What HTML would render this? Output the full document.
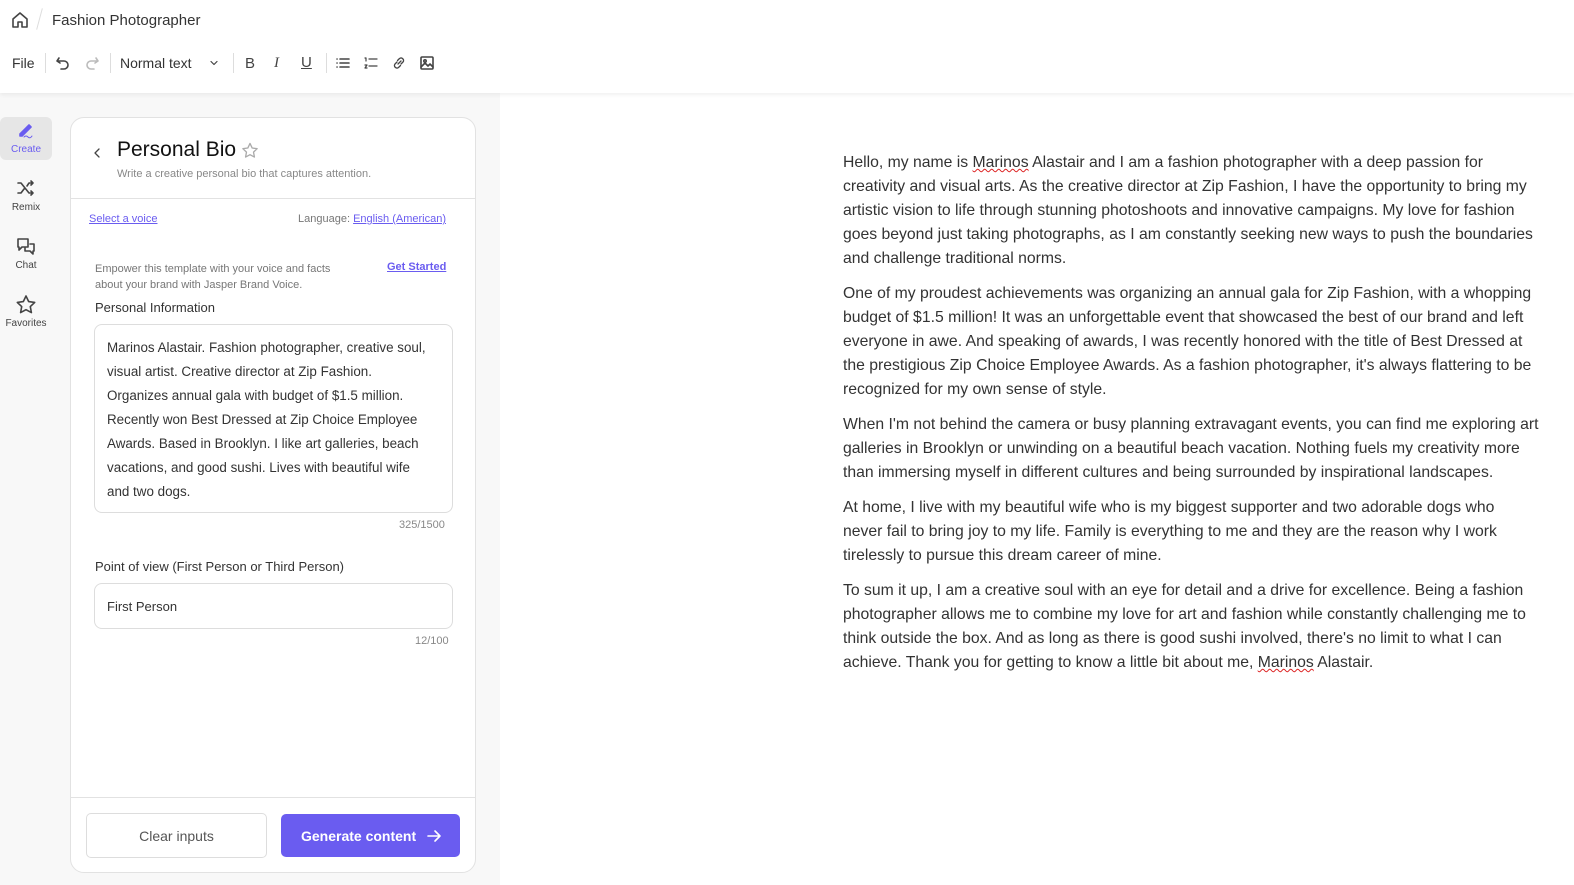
<!DOCTYPE html>
<html><head><meta charset="utf-8"><style>
*{box-sizing:border-box;margin:0;padding:0}
body{width:1574px;height:885px;overflow:hidden;font-family:"Liberation Sans",sans-serif;background:#fff;color:#222;position:relative}
.top{position:absolute;left:0;top:0;width:1574px;height:93px;background:#fff;box-shadow:0 2px 4px rgba(0,0,0,.06);z-index:2}
.abs{position:absolute}
.side{position:absolute;left:0;top:93px;width:500px;height:792px;background:#f8f8f8}
.nav{position:absolute;left:0;width:52px;text-align:center;font-size:10px;color:#444}
.card{position:absolute;left:70px;top:117px;width:406px;height:756px;background:#fff;border:1px solid #e2e2e2;border-radius:14px}
.lnk{color:#6a5cf0;text-decoration:underline}
.doc{position:absolute;left:843px;top:151px;width:696px;font-size:15.75px;line-height:24px;color:#333}
.doc p{margin-bottom:11px}
.sq{text-decoration:underline wavy #d22;text-decoration-thickness:1px}
svg{stroke:#444;fill:none;stroke-width:1.6;stroke-linecap:round;stroke-linejoin:round}
</style></head><body>
<div class="top">
<svg class="abs" style="left:10px;top:10px" width="20" height="20" viewBox="0 0 20 20"><path d="M3 9l7-6 7 6v8H12v-5H8v5H3z"/></svg>
<div class="abs" style="left:39px;top:8px;width:1px;height:22px;background:#ddd;transform:rotate(15deg)"></div>
<div class="abs" style="left:52px;top:12px;font-size:15px;color:#333">Fashion Photographer</div>
<div class="abs" style="left:12px;top:55px;font-size:14px;color:#333">File</div>
<div class="abs" style="left:45px;top:53px;width:1px;height:20px;background:#ddd"></div>
<svg class="abs" style="left:55px;top:55px" width="16" height="16" viewBox="0 0 16 16"><path d="M4 3L2 6l3 2M2 6h7a4 4 0 010 8H6"/></svg>
<svg class="abs" style="left:84px;top:55px" width="16" height="16" viewBox="0 0 16 16"><path stroke="#bbb" d="M12 3l2 3-3 2M14 6H7a4 4 0 000 8h3"/></svg>
<div class="abs" style="left:110px;top:53px;width:1px;height:20px;background:#ddd"></div>
<div class="abs" style="left:120px;top:55px;font-size:14px;color:#333">Normal text</div>
<svg class="abs" style="left:208px;top:57px" width="12" height="12" viewBox="0 0 12 12"><path d="M3 4.5l3 3 3-3" stroke-width="1.2"/></svg>
<div class="abs" style="left:233px;top:53px;width:1px;height:20px;background:#ddd"></div>
<div class="abs" style="left:245px;top:55px;font-size:15px;color:#444">B</div>
<div class="abs" style="left:274px;top:55px;font-size:15px;color:#444;font-style:italic;font-family:'Liberation Serif'">I</div>
<div class="abs" style="left:301px;top:54px;font-size:15px;color:#444;text-decoration:underline">U</div>
<div class="abs" style="left:326px;top:53px;width:1px;height:20px;background:#ddd"></div>
<svg class="abs" style="left:335px;top:55px" width="16" height="16" viewBox="0 0 16 16"><path d="M2 4h.1M2 8h.1M2 12h.1M5 4h9M5 8h9M5 12h9"/></svg>
<svg class="abs" style="left:363px;top:55px" width="16" height="16" viewBox="0 0 16 16"><path d="M2 3h1v3M6 4h8M6 11h8M2 10h2l-2 3h2" stroke-width="1.2"/></svg>
<svg class="abs" style="left:391px;top:55px" width="16" height="16" viewBox="0 0 16 16"><path d="M7 9l3-3M6 7L4 9a2.5 2.5 0 003.5 3.5l2-2M10 9l2-2A2.5 2.5 0 008.5 3.5l-2 2" stroke-width="1.3"/></svg>
<svg class="abs" style="left:419px;top:55px" width="16" height="16" viewBox="0 0 16 16"><rect x="2" y="2" width="12" height="12" rx="1"/><circle cx="6" cy="6" r="1.2"/><path d="M2 12l4-4 3 3 2-2 3 3"/></svg>
</div>
<div class="side"></div>
<div class="abs" style="left:0;top:117px;width:52px;height:43px;background:#e6e6e6;border-radius:6px"></div>
<svg class="abs" style="left:16px;top:121px" width="20" height="18" viewBox="0 0 20 18"><path d="M4 13L13 4l2 2-9 9H4z" fill="#6a5cf0" stroke="#6a5cf0"/><path d="M8 16q2-2 4 0t4-1" stroke="#6a5cf0" stroke-width="1"/></svg>
<div class="nav" style="top:144px;color:#6a5cf0">Create</div>
<svg class="abs" style="left:16px;top:179px" width="20" height="18" viewBox="0 0 20 18"><path d="M2 4h3l8 10h4M2 14h3l3-4M11 7l2-3h4M15 2l2 2-2 2M15 12l2 2-2 2"/></svg>
<div class="nav" style="top:202px">Remix</div>
<svg class="abs" style="left:15px;top:236px" width="22" height="22" viewBox="0 0 22 22"><path d="M3 3h10v8H7l-3 3v-3H3zM15 8h4v7h-1v3l-3-3h-5v-3"/></svg>
<div class="nav" style="top:260px">Chat</div>
<svg class="abs" style="left:15px;top:294px" width="22" height="20" viewBox="0 0 22 20"><path d="M11 2l2.7 5.6 6 .8-4.4 4.2 1.1 6L11 15.7 5.6 18.6l1.1-6L2.3 8.4l6-.8z"/></svg>
<div class="nav" style="top:318px">Favorites</div>
<div class="card">
<svg class="abs" style="left:20px;top:29px" width="12" height="12" viewBox="0 0 12 12"><path d="M8 2L4 6l4 4" stroke-width="1.3"/></svg>
<div class="abs" style="left:46px;top:20px;font-size:21px;color:#111">Personal Bio</div>
<svg class="abs" style="left:170px;top:23px" width="18" height="18" viewBox="0 0 22 20"><path stroke="#aaa" d="M11 2l2.7 5.6 6 .8-4.4 4.2 1.1 6L11 15.7 5.6 18.6l1.1-6L2.3 8.4l6-.8z"/></svg>
<div class="abs" style="left:46px;top:50px;font-size:11px;color:#888">Write a creative personal bio that captures attention.</div>
<div class="abs" style="left:0;top:80px;width:404px;height:1px;background:#e2e2e2"></div>
<div class="abs lnk" style="left:18px;top:95px;font-size:11px">Select a voice</div>
<div class="abs" style="left:227px;top:95px;font-size:11px;color:#777">Language: <span class="lnk">English (American)</span></div>
<div class="abs" style="left:24px;top:143px;font-size:11px;color:#777;line-height:16px">Empower this template with your voice and facts<br>about your brand with Jasper Brand Voice.</div>
<div class="abs lnk" style="left:316px;top:143px;font-size:11px;font-weight:bold">Get Started</div>
<div class="abs" style="left:24px;top:182px;font-size:13px;color:#333">Personal Information</div>
<div class="abs" style="left:23px;top:206px;width:359px;height:189px;border:1px solid #ddd;border-radius:8px;padding:11px 18px 11px 12px;font-size:13.4px;line-height:24px;color:#333">Marinos Alastair. Fashion photographer, creative soul, visual artist. Creative director at Zip Fashion. Organizes annual gala with budget of $1.5 million. Recently won Best Dressed at Zip Choice Employee Awards. Based in Brooklyn. I like art galleries, beach vacations, and good sushi. Lives with beautiful wife and two dogs.</div>
<div class="abs" style="left:328px;top:401px;font-size:11px;color:#888">325/1500</div>
<div class="abs" style="left:24px;top:441px;font-size:13px;color:#333">Point of view (First Person or Third Person)</div>
<div class="abs" style="left:23px;top:465px;width:359px;height:46px;border:1px solid #ddd;border-radius:8px;padding:15px 12px;font-size:13px;color:#333">First Person</div>
<div class="abs" style="left:344px;top:517px;font-size:11px;color:#888">12/100</div>
<div class="abs" style="left:0;top:679px;width:404px;height:1px;background:#e2e2e2"></div>
<div class="abs" style="left:15px;top:695px;width:181px;height:45px;border:1px solid #ddd;border-radius:5px;text-align:center;line-height:44px;font-size:14px;color:#555">Clear inputs</div>
<div class="abs" style="left:210px;top:696px;width:179px;height:43px;background:#6a5cf0;border-radius:5px;color:#fff;font-size:14px;font-weight:bold;line-height:44px;padding-left:20px">Generate content <svg style="stroke:#fff;vertical-align:-3px;margin-left:6px" width="16" height="16" viewBox="0 0 16 16"><path d="M2 8h12M9 3l5 5-5 5"/></svg></div>
</div>
<div class="doc">
<p>Hello, my name is <span class="sq">Marinos</span> Alastair and I am a fashion photographer with a deep passion for creativity and visual arts. As the creative director at Zip Fashion, I have the opportunity to bring my artistic vision to life through stunning photoshoots and innovative campaigns. My love for fashion goes beyond just taking photographs, as I am constantly seeking new ways to push the boundaries and challenge traditional norms.</p>
<p>One of my proudest achievements was organizing an annual gala for Zip Fashion, with a whopping budget of $1.5 million! It was an unforgettable event that showcased the best of our brand and left everyone in awe. And speaking of awards, I was recently honored with the title of Best Dressed at the prestigious Zip Choice Employee Awards. As a fashion photographer, it's always flattering to be recognized for my own sense of style.</p>
<p>When I'm not behind the camera or busy planning extravagant events, you can find me exploring art galleries in Brooklyn or unwinding on a beautiful beach vacation. Nothing fuels my creativity more than immersing myself in different cultures and being surrounded by inspirational landscapes.</p>
<p>At home, I live with my beautiful wife who is my biggest supporter and two adorable dogs who<br>never fail to bring joy to my life. Family is everything to me and they are the reason why I work<br>tirelessly to pursue this dream career of mine.</p>
<p>To sum it up, I am a creative soul with an eye for detail and a drive for excellence. Being a fashion photographer allows me to combine my love for art and fashion while constantly challenging me to think outside the box. And as long as there is good sushi involved, there's no limit to what I can achieve. Thank you for getting to know a little bit about me, <span class="sq">Marinos</span> Alastair.</p>
</div>
</body></html>
